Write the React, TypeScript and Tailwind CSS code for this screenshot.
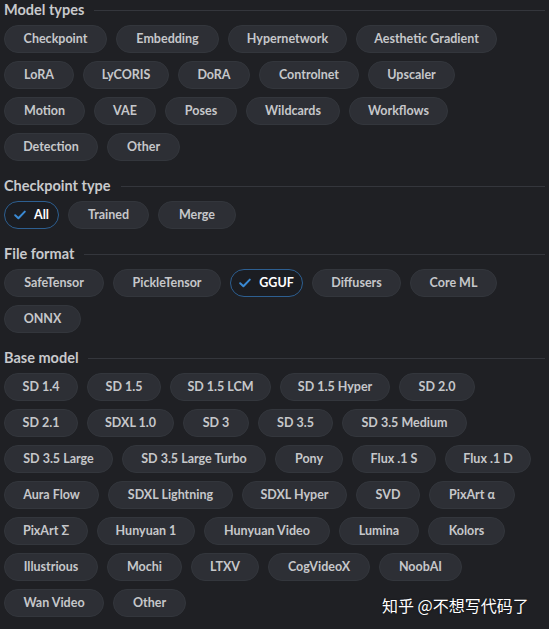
import React from "react";

type Chip = [string, number];

const sections: { title: string; chips: Chip[]; selected?: string }[] = [
  {
    title: "Model types",
    chips: [
      ["Checkpoint", 103], ["Embedding", 103], ["Hypernetwork", 119], ["Aesthetic Gradient", 141],
      ["LoRA", 70], ["LyCORIS", 86], ["DoRA", 72], ["Controlnet", 100], ["Upscaler", 87],
      ["Motion", 81], ["VAE", 62], ["Poses", 72], ["Wildcards", 94], ["Workflows", 99],
      ["Detection", 94], ["Other", 73],
    ],
  },
  {
    title: "Checkpoint type",
    selected: "All",
    chips: [["All", 55], ["Trained", 81], ["Merge", 78]],
  },
  {
    title: "File format",
    selected: "GGUF",
    chips: [
      ["SafeTensor", 100], ["PickleTensor", 108], ["GGUF", 73], ["Diffusers", 89], ["Core ML", 87],
      ["ONNX", 77],
    ],
  },
  {
    title: "Base model",
    chips: [
      ["SD 1.4", 74], ["SD 1.5", 74], ["SD 1.5 LCM", 101], ["SD 1.5 Hyper", 110], ["SD 2.0", 76],
      ["SD 2.1", 74], ["SDXL 1.0", 87], ["SD 3", 66], ["SD 3.5", 75], ["SD 3.5 Medium", 125],
      ["SD 3.5 Large", 109], ["SD 3.5 Large Turbo", 144], ["Pony", 68], ["Flux .1 S", 84], ["Flux .1 D", 86],
      ["Aura Flow", 95], ["SDXL Lightning", 125], ["SDXL Hyper", 105], ["SVD", 64], ["PixArt α", 86],
      ["PixArt Σ", 84], ["Hunyuan 1", 98], ["Hunyuan Video", 126], ["Lumina", 80], ["Kolors", 77],
      ["Illustrious", 94], ["Mochi", 75], ["LTXV", 68], ["CogVideoX", 102], ["NoobAI", 83],
      ["Wan Video", 100], ["Other", 73],
    ],
  },
];

function Check() {
  return (
    <svg width="12" height="10" viewBox="0 0 12 10" fill="none">
      <path d="M1.2 5.2 L4.4 8.2 L10.8 1.6" stroke="#3a8ad4" strokeWidth="2" strokeLinecap="round" strokeLinejoin="round" />
    </svg>
  );
}

function ChipView({ label, width, selected }: { label: string; width: number; selected: boolean }) {
  if (selected) {
    return (
      <div
        style={{ width }}
        className="h-[28px] rounded-full border border-[#2d5f91] bg-[#1b1d22] flex items-center justify-center gap-[8px] text-white text-[12.5px] font-bold"
      >
        <Check />
        <span>{label}</span>
      </div>
    );
  }
  return (
    <div
      style={{ width }}
      className="h-[28px] rounded-full border border-[#33363c] bg-[#2d2f35] flex items-center justify-center text-[#c6c7ca] text-[12.5px] font-bold whitespace-nowrap"
    >
      {label}
    </div>
  );
}

export default function App() {
  return (
    <div
      className="relative w-[549px] h-[629px] overflow-hidden bg-[#1f2024] px-[4px] pt-[1px]"
      style={{ fontFamily: '"Lato", "Noto Sans", "Noto Sans CJK SC", sans-serif' }}
    >
      {sections.map((s, i) => (
        <div key={s.title} className={i === 0 ? "" : "mt-[16px]"}>
          <div className="h-5 flex items-center gap-[10px] mb-1">
            <span className="text-[14.5px] font-bold text-[#c8c9cc] whitespace-nowrap -translate-y-[1px]">{s.title}</span>
            <div className="flex-1 h-px bg-[#34363c] -translate-y-[1px]" />
          </div>
          <div className="w-[538px] flex flex-wrap gap-x-[9px] gap-y-2">
            {s.chips.map(([label, w]) => (
              <ChipView key={label} label={label} width={w} selected={s.selected === label} />
            ))}
          </div>
        </div>
      ))}
      <div
        className="absolute left-[382px] top-[593px] text-[16px] text-white whitespace-nowrap"
        style={{ fontFamily: '"Noto Sans CJK SC", sans-serif', textShadow: "0 0 2px rgba(0,0,0,0.6)" }}
      >
        知乎 @不想写代码了
      </div>
    </div>
  );
}
